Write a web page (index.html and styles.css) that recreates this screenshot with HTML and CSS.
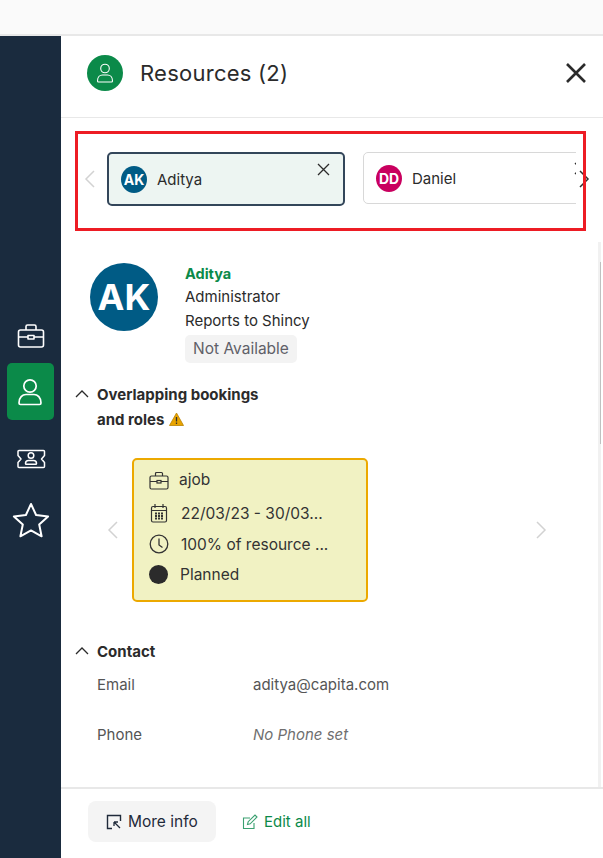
FILE: index.html
```html
<!DOCTYPE html>
<html lang="en">
<head>
<meta charset="utf-8">
<title>Resources</title>
<link rel="stylesheet" href="styles.css">
</head>
<body>
<div class="topbar"></div>
<div class="main">
  <nav class="sidebar">
    <div class="nav-item nav-job">
      <svg width="30" height="26" viewBox="0 0 30 26" fill="none" stroke="#fff" stroke-width="1.6" stroke-linejoin="round"><rect x="2.5" y="7" width="25" height="17" rx="2"/><path d="M10 7V3.5a1.500 1.500 0 0 1 1.500-1.500h7A1.500 1.500 0 0 1 20 3.500V7M2.500 14H12M18 14h9.500"/><rect x="12" y="12.500" width="6" height="3.500"/></svg>
    </div>
    <div class="nav-item nav-active">
      <svg width="28" height="30" viewBox="0 0 28 30" fill="none" stroke="#fff" stroke-width="1.700"><circle cx="14" cy="9" r="6.200"/><path d="M3 26c0-5.500 3.500-8.500 7-8.500h8c3.500 0 7 3 7 8.500 0 .8-.5 1.500-1.500 1.500h-19C3.500 27.500 3 26.800 3 26z"/></svg>
    </div>
    <div class="nav-item nav-ticket">
      <svg width="30" height="20" viewBox="0 0 30 20" fill="none" stroke="#fff" stroke-width="1.500" stroke-linejoin="round"><path d="M3 1.500h24.500a1 1 0 0 1 1 1V6.500l-3 3.500 3 3.500v4a1 1 0 0 1-1 1H3a1 1 0 0 1-1-1v-4l3-3.500-3-3.500v-4a1 1 0 0 1 1-1z"/><circle cx="15" cy="6.500" r="2.800"/><path d="M9.500 14.500c0-2 1.500-3 3-3h5c1.500 0 3 1 3 3 0 .5-.3.8-.8.8h-9.400c-.5 0-.8-.3-.8-.8z"/></svg>
    </div>
    <div class="nav-item nav-star">
      <svg width="38" height="36" viewBox="0 0 38 36" fill="none" stroke="#fff" stroke-width="2" stroke-linejoin="round"><path d="M19 2l5.100 11 12 1.400-8.900 8.100 2.400 11.800L19 28.400 8.400 34.300l2.400-11.800L1.900 14.400l12-1.400z"/></svg>
    </div>
  </nav>
  <main class="panel">
    <header class="panel-header">
      <div class="header-badge">
        <svg width="20" height="22" viewBox="0 0 20 22" fill="none" stroke="#fff" stroke-width="1.100"><circle cx="10" cy="6.500" r="4.300"/><path d="M2.500 19c0-4 2.500-6 5-6h5c2.500 0 5 2 5 6 0 .7-.4 1-1 1h-13c-.6 0-1-.3-1-1z"/></svg>
      </div>
      <h1 class="panel-title">Resources (2)</h1>
      <svg class="header-close" width="22" height="22" viewBox="0 0 22 22" fill="none" stroke="#2b2b2b" stroke-width="2.600"><path d="M2 2l18 18M20 2L2 20"/></svg>
    </header>

    <section class="tabs">
      <svg class="chev" width="12" height="18" viewBox="0 0 12 18" fill="none" stroke="#d2d2d2" stroke-width="1.500"><path d="M10 1L2 9l8 8"/></svg>
      <div class="tab-viewport">
        <div class="tab tab-on">
          <span class="avatar avatar-ak">AK</span>
          <span class="tab-name">Aditya</span>
          <svg class="tab-x" width="13" height="13" viewBox="0 0 13 13" fill="none" stroke="#2b2b2b" stroke-width="1.300"><path d="M1 1l11 11M12 1L1 12"/></svg>
        </div>
        <div class="tab">
          <span class="avatar avatar-dd">DD</span>
          <span class="tab-name">Daniel</span>
          <svg class="tab-x" width="13" height="13" viewBox="0 0 13 13" fill="none" stroke="#2b2b2b" stroke-width="1.300"><path d="M1 1l11 11M12 1L1 12"/></svg>
        </div>
      </div>
      <svg class="chev chev-next" width="12" height="18" viewBox="0 0 12 18" fill="none" stroke="#2f2f2f" stroke-width="1.500"><path d="M2 1l8 8-8 8"/></svg>
      <div class="annotation"></div>
    </section>

    <div class="scroll">
      <div class="scroll-thumb"></div>
      <div class="profile">
        <div class="profile-avatar">AK</div>
        <div class="profile-text">
          <div class="profile-name">Aditya</div>
          <div class="profile-line">Administrator</div>
          <div class="profile-line">Reports to Shincy</div>
          <span class="status">Not Available</span>
        </div>
      </div>

      <div class="section-head section-overlap">
        <svg class="caret" width="14" height="8" viewBox="0 0 14 8" fill="none" stroke="#2b2b2b" stroke-width="1.300"><path d="M1 7l6-6 6 6"/></svg>
        <h2 class="section-title">Overlapping bookings<br>and roles
          <svg class="warn" width="15" height="14" viewBox="0 0 15 14"><path d="M7.500 1L14.500 13.500H.5z" fill="#e9a400" stroke="#b98200" stroke-width=".8" stroke-linejoin="round"/><path d="M7.500 5v4.500M7.500 10.500v1.500" stroke="#33302a" stroke-width="1.300"/></svg>
        </h2>
      </div>

      <div class="carousel">
        <svg class="chev" width="12" height="18" viewBox="0 0 12 18" fill="none" stroke="#d2d2d2" stroke-width="1.500"><path d="M10 1L2 9l8 8"/></svg>
        <div class="booking">
          <div class="booking-row row-job">
            <svg class="b-icon" width="20" height="20" viewBox="0 0 20 20" fill="none" stroke="#333" stroke-width="1.200"><rect x="1" y="5" width="18" height="13" rx="1.500"/><path d="M6.500 5V2.500a1 1 0 0 1 1-1h5a1 1 0 0 1 1 1V5M1 10.500h7M12 10.500h7"/><rect x="8" y="9.500" width="4" height="2.500"/></svg>
            <span>ajob</span>
          </div>
          <div class="booking-row row-date">
            <svg class="b-icon" width="20" height="20" viewBox="0 0 20 20" fill="none" stroke="#333" stroke-width="1.200"><rect x="2.500" y="3.500" width="15" height="15.500" rx="1.500"/><path d="M2.500 7.500h15M6 1v4M14 1v4"/><path d="M6 10.500h8M6 13h8M6 15.500h8" stroke-width="1.800" stroke-dasharray="2 1"/></svg>
            <span>22/03/23 - 30/03...</span>
          </div>
          <div class="booking-row row-time">
            <svg class="b-icon" width="20" height="20" viewBox="0 0 20 20" fill="none" stroke="#333" stroke-width="1.300"><circle cx="10" cy="10" r="8.800"/><path d="M10 4.500V11l3.500 2.500"/></svg>
            <span>100% of resource ...</span>
          </div>
          <div class="booking-row row-state">
            <span class="dot"></span>
            <span>Planned</span>
          </div>
        </div>
        <svg class="chev chev-right" width="12" height="18" viewBox="0 0 12 18" fill="none" stroke="#d2d2d2" stroke-width="1.500"><path d="M2 1l8 8-8 8"/></svg>
      </div>

      <div class="section-head section-contact">
        <svg class="caret" width="14" height="8" viewBox="0 0 14 8" fill="none" stroke="#2b2b2b" stroke-width="1.300"><path d="M1 7l6-6 6 6"/></svg>
        <h2 class="section-title">Contact</h2>
      </div>
      <dl class="contact">
        <dt>Email</dt><dd>aditya@capita.com</dd>
        <dt>Phone</dt><dd class="empty">No Phone set</dd>
      </dl>
    </div>

    <footer class="panel-footer">
      <button class="more-btn">
        <svg width="16" height="16" viewBox="0 0 16 16" fill="none" stroke="#1f2a3a" stroke-width="1.400"><path d="M6 14.500H1.500v-13h13V7"/><path d="M8 8l6 6M8 8h4M8 8v4" stroke-width="1.300"/></svg>
        More info
      </button>
      <a class="edit-link">
        <svg width="16" height="16" viewBox="0 0 16 16" fill="none" stroke="#3aa070" stroke-width="1.100"><path d="M12 9v5.500H1.500V4H8"/><path d="M5.500 10.500l.7-2.800L13 1l2 2-6.800 6.800z"/></svg>
        Edit all
      </a>
    </footer>
  </main>
</div>
</body>
</html>
```
FILE: styles.css
```css
* { box-sizing: border-box; }
html, body { margin: 0; height: 100%; overflow: hidden; }
body { font-family: Inter, "Liberation Sans", sans-serif; color: #2b2b2b; background: #fff; }

.topbar { height: 36px; background: #fafafa; border-bottom: 2px solid #e8e8e8; }
.main { display: flex; height: 822px; }

.sidebar { width: 61px; flex: none; background: #1a2b3e; display: flex; flex-direction: column; align-items: center; padding-top: 287px; }
.nav-item { display: flex; align-items: center; justify-content: center; }
.nav-active { width: 47px; height: 57px; margin: 14px 0 0 -1px; background: #0b8a49; border-radius: 5px; }
.nav-ticket { margin-top: 29px; }
.nav-star { margin-top: 33px; }

.panel { flex: 1; display: flex; flex-direction: column; min-width: 0; }
.panel-header { height: 82px; flex: none; display: flex; align-items: center; padding: 0 16px 8px 26px; border-bottom: 1px solid #e8e8e8; }
.header-badge { width: 36px; height: 36px; border-radius: 50%; background: #0b8a49; display: flex; align-items: center; justify-content: center; }
.panel-title { flex: 1; margin: 0 0 0 17px; font-size: 22px; font-weight: 400; letter-spacing: .25px; line-height: 28px; }

.tabs { position: relative; height: 124px; flex: none; display: flex; align-items: center; padding: 0 0 0 23px; }
.tabs > .chev { flex: none; position: relative; top: -1px; }
.tab-viewport { width: 469px; margin-left: 11px; display: flex; gap: 18px; overflow: hidden; position: relative; top: -1px; }
.tab { width: 206px; flex: none; height: 52px; padding: 0 12px; border: 1px solid #d8d8d8; border-radius: 5px; display: flex; align-items: center; gap: 10px; position: relative; background: #fff; }
.tab-on { width: 238px; height: 54px; border: 2px solid #33465a; background: #edf5f2; }
.tab + .tab { flex-basis: 238px; width: 238px; }
.avatar { width: 24px; height: 27px; flex: none; border-radius: 50%; color: #fff; font-size: 14px; font-weight: 700; display: flex; align-items: center; justify-content: center; width: 26px; }
.avatar-ak { background: #005b85; }
.avatar-dd { background: #c9005f; }
.tab-name { font-size: 15px; }
.tab-x { position: absolute; top: 9px; right: 13px; }
.tabs > .chev-next { margin-left: 2px; }
.annotation { position: absolute; left: 14px; top: 13px; width: 511px; height: 100px; border: 3px solid #ed1c24; pointer-events: none; }

.scroll { flex: 1; position: relative; min-height: 0; border-right: 0; overflow: hidden; }
.scroll::before { content: ""; position: absolute; right: 2px; top: 0; bottom: 0; width: 3px; background: #f1f1f1; }
.scroll-thumb { position: absolute; right: 2px; top: 20px; width: 1px; height: 182px; background: #c0c0c0; }

.profile { display: flex; padding: 21px 0 0 29px; }
.profile-avatar { width: 68px; height: 68px; flex: none; border-radius: 50%; background: #005b85; color: #fff; font-size: 36px; font-weight: 700; display: flex; align-items: center; justify-content: center; }
.profile-text { margin-left: 27px; font-size: 15px; }
.profile-name { font-weight: 700; font-size: 14.500px; color: #0b8a49; line-height: 22px; }
.profile-line { line-height: 23.500px; }
.status { display: inline-block; margin-top: 3px; padding: 0 8px; height: 28px; line-height: 27px; border-radius: 5px; background: #f3f3f3; color: #5f6068; font-size: 15.500px; }

.section-head { display: flex; align-items: flex-start; padding-left: 14px; }
.section-overlap { margin-top: 20px; }
.section-contact { margin-top: 38px; }
.caret { flex: none; margin: 7px 0 0 0; }
.section-title { margin: 0 0 0 8px; font-size: 15px; font-weight: 700; line-height: 24.500px; color: #2b2b2b; }
.warn { vertical-align: -1px; margin-left: 1px; }

.carousel { display: flex; align-items: center; padding-left: 46px; margin-top: 26px; }
.booking { width: 236px; height: 144px; margin-left: 13px; background: #f1f2c3; border: 2px solid #eca900; border-radius: 5px; padding: 10px 15px; font-size: 15.500px; color: #333; display: flex; flex-direction: column; }
.booking-row { display: flex; align-items: center; gap: 12px; height: 32px; }
.row-job { height: 22px; gap: 10px; }
.row-job span { position: relative; top: -2px; }
.row-date { margin-top: 5px; height: 32px; }
.row-time { margin-top: -1px; height: 32px; }
.row-state { margin-top: -1px; height: 31px; }
.b-icon { flex: none; }
.dot { width: 19px; height: 19px; flex: none; border-radius: 50%; background: #2b2b2b; }
.chev-right { margin-left: 167px; }

.contact { margin: 8px 0 0 36px; display: grid; grid-template-columns: 156px 1fr; grid-auto-rows: 50px; font-size: 15px; color: #555; line-height: 24px; }
.contact dt, .contact dd { margin: 0; }
.contact .empty { font-style: italic; color: #6f6f6f; }

.panel-footer { height: 71px; flex: none; border-top: 2px solid #e8e8e8; display: flex; align-items: center; padding: 0 0 4px 27px; }
.more-btn { display: flex; align-items: center; gap: 6px; height: 41px; width: 128px; padding: 0 0 0 18px; border: 0; border-radius: 8px; background: #f4f4f4; font: 15.500px Inter, "Liberation Sans", sans-serif; color: #1f2a3a; }
.edit-link { margin-left: 26px; display: flex; align-items: center; gap: 6px; font-size: 15px; color: #0b8a49; }
```
